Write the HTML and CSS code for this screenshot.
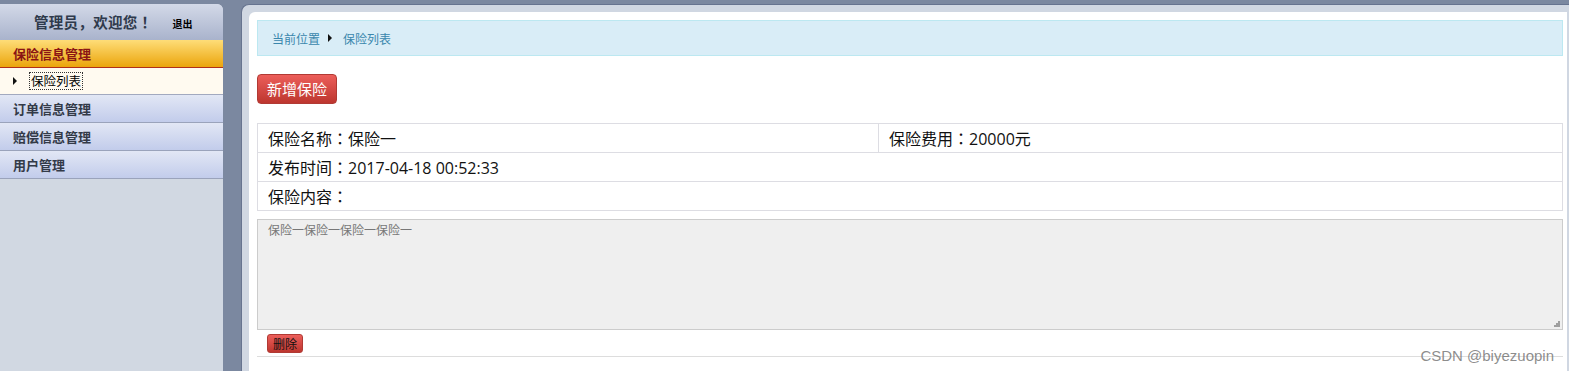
FILE: index.html
```html
<!DOCTYPE html>
<html lang="zh">
<head>
<meta charset="utf-8">
<title>保险列表</title>
<link rel="stylesheet" href="styles.css">
</head>
<body>
<div class="layout">
  <aside class="sidebar">
    <div class="side-head">
      <span class="welcome">管理员<span class="punct" lang="ja">，</span>欢迎您<span class="punct" lang="ja">！</span></span>
      <a class="logout">退出</a>
    </div>
    <div class="menu-title active">保险信息管理</div>
    <div class="submenu">
      <span class="arrow"></span>
      <span class="sub-link">保险列表</span>
    </div>
    <div class="menu-title">订单信息管理</div>
    <div class="menu-title">赔偿信息管理</div>
    <div class="menu-title">用户管理</div>
  </aside>
  <main class="panel">
    <div class="inner">
      <div class="crumb">
        <span>当前位置</span>
        <span class="arrow dark"></span>
        <span>保险列表</span>
      </div>
      <div class="actions">
        <button class="btn-danger big">新增保险</button>
      </div>
      <div class="record">
        <div class="row split">
          <div class="cell">保险名称<span class="punct" lang="ja">：</span>保险一</div>
          <div class="cell">保险费用<span class="punct" lang="ja">：</span>20000元</div>
        </div>
        <div class="row"><div class="cell">发布时间<span class="punct" lang="ja">：</span>2017-04-18 00:52:33</div></div>
        <div class="row"><div class="cell">保险内容<span class="punct" lang="ja">：</span></div></div>
      </div>
      <div class="content-wrap">
        <textarea class="content" readonly>保险一保险一保险一保险一</textarea>
        <span class="grip"></span>
      </div>
      <div class="del-row">
        <button class="btn-danger small">删除</button>
      </div>
    </div>
  </main>
</div>
<div class="watermark">CSDN @biyezuopin</div>
</body>
</html>
```
FILE: styles.css
```css
html, body {
  margin: 0;
  height: 100%;
}
body {
  background: #7b88a0;
  font-family: "Noto Sans CJK SC", "Microsoft YaHei", sans-serif;
  overflow: hidden;
}
.layout {
  display: flex;
  height: 100%;
  padding-top: 4px;
  box-sizing: border-box;
}
.sidebar {
  width: 223px;
  flex: none;
  margin-right: 18px;
  background: #d1d8e2;
  border-top-right-radius: 6px;
  overflow: hidden;
}
.side-head {
  height: 36px;
  background: linear-gradient(#d3d9e8, #a9b3cc);
  display: flex;
  align-items: center;
  padding-left: 34px;
  box-sizing: border-box;
}
.welcome {
  font-size: 14.5px;
  font-weight: bold;
  color: #2f3a4c;
  line-height: 18px;
  letter-spacing: 0.3px;
}
.punct {
  font-family: "Noto Sans CJK JP", "Noto Sans CJK SC", sans-serif;
}
.logout {
  font-size: 10px;
  font-weight: bold;
  color: #000;
  margin-left: 20px;
  margin-top: 3px;
  line-height: 12px;
}
.menu-title {
  height: 27px;
  line-height: 27px;
  padding-left: 13px;
  font-size: 13px;
  font-weight: bold;
  color: #333a48;
  background: linear-gradient(#e2e7f5, #c2cceb);
  border-bottom: 1px solid #9aa3bb;
}
.menu-title.active {
  background: linear-gradient(#fedd78, #eba50c);
  color: #8a1414;
  border-bottom: 1px solid #b0301a;
}
.submenu {
  height: 26px;
  background: #fffaf0;
  border-bottom: 1px solid #a2a9bf;
  display: flex;
  align-items: center;
  padding-left: 13px;
}
.arrow {
  width: 0;
  height: 0;
  border-top: 4px solid transparent;
  border-bottom: 4px solid transparent;
  border-left: 4px solid #111;
}
.sub-link {
  margin-left: 13px;
  font-size: 12.5px;
  line-height: 16px;
  color: #000;
  outline: 1px dotted #333;
  padding: 0 1px;
}
.panel {
  flex: 1;
  min-width: 0;
  background: #d0d7e2;
  border-top: 1px solid #66738f;
  border-left: 1px solid #66738f;
  border-top-left-radius: 8px;
  padding: 7px 2px 0 7px;
  display: flex;
}
.inner {
  flex: 1;
  min-width: 0;
  background: #fff;
  border-top-left-radius: 6px;
  padding: 8px 4px 0 8px;
}
.crumb {
  height: 34px;
  background: #d9edf7;
  border: 1px solid #bce8f1;
  display: flex;
  align-items: center;
  padding-left: 14px;
  font-size: 12px;
  color: #3a87ad;
}
.crumb .arrow {
  margin: 0 11px 0 8px;
}
.actions {
  padding-top: 18px;
  height: 49px;
}
.btn-danger {
  font-family: inherit;
  background: linear-gradient(#ec5e5a, #bd362f);
  border: 1px solid #b13a34;
  border-radius: 4px;
  padding: 0;
  cursor: pointer;
}
.btn-danger.big {
  width: 80px;
  height: 30px;
  color: #fff;
  font-size: 15px;
  line-height: 28px;
}
.btn-danger.small {
  width: 36px;
  height: 19px;
  color: #111;
  font-size: 12px;
  line-height: 17px;
  border-radius: 3px;
}
.record {
  border: 1px solid #dddde3;
  border-bottom: none;
}
.row {
  display: flex;
  height: 28px;
  border-bottom: 1px solid #dddde3;
}
.cell {
  padding-left: 10px;
  font-family: "Open Sans", "Noto Sans CJK SC", sans-serif;
  font-size: 16px;
  line-height: 28px;
  color: #111;
}
.split .cell {
  flex: none;
  width: 610px;
}
.split .cell + .cell {
  flex: 1;
  border-left: 1px solid #dddde3;
}
.content-wrap {
  position: relative;
  margin-top: 8px;
}
.content {
  display: block;
  width: 100%;
  box-sizing: border-box;
  height: 111px;
  margin: 0;
  background: #efefef;
  border: 1px solid #cccccc;
  padding: 2px 10px;
  font-family: inherit;
  font-size: 12px;
  line-height: 16px;
  color: #777;
  resize: none;
}
.grip {
  position: absolute;
  right: 3px;
  bottom: 3px;
  width: 6px;
  height: 6px;
  background:
    radial-gradient(circle, #999 0.7px, transparent 0.8px) 4px 0 / 2px 2px no-repeat,
    radial-gradient(circle, #999 0.7px, transparent 0.8px) 2px 2px / 2px 2px no-repeat,
    radial-gradient(circle, #999 0.7px, transparent 0.8px) 4px 2px / 2px 2px no-repeat,
    radial-gradient(circle, #999 0.7px, transparent 0.8px) 0 4px / 2px 2px no-repeat,
    radial-gradient(circle, #999 0.7px, transparent 0.8px) 2px 4px / 2px 2px no-repeat,
    radial-gradient(circle, #999 0.7px, transparent 0.8px) 4px 4px / 2px 2px no-repeat;
}
.del-row {
  padding: 4px 0 3px 10px;
  border-bottom: 1px solid #dddddd;
  line-height: 0;
}
.watermark {
  position: absolute;
  right: 15px;
  bottom: 7px;
  font-family: "Liberation Sans", Arial, sans-serif;
  font-size: 15px;
  color: rgba(120, 120, 120, 0.85);
}
```
